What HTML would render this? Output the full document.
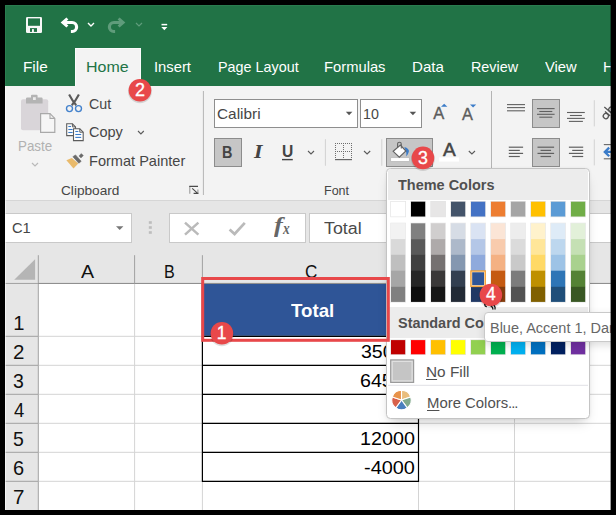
<!DOCTYPE html>
<html lang="en"><head><meta charset="utf-8"><title>Excel - Fill Color</title>
<style>
html,body{margin:0;padding:0;background:#000;overflow:hidden;}
body{width:616px;height:515px;overflow:hidden;position:relative;font-family:"Liberation Sans", sans-serif;}
#app{position:absolute;left:0;top:0;width:616px;height:515px;overflow:hidden;}
.b{position:absolute;}
.s{position:absolute;left:0;top:0;}
.t{position:absolute;white-space:pre;transform-origin:0 0;}
.t u{text-decoration-thickness:1px;text-underline-offset:1.5px;}
.clip{position:absolute;overflow:hidden;}
.dots{letter-spacing:-1.1px;}
.drop{background:#fff;border:1px solid #c4c4c4;border-radius:4.5px;box-sizing:border-box;box-shadow:0 7px 12px -5px rgba(0,0,0,.22), 0 0 3px rgba(0,0,0,.06);}
.tip{background:#fff;border:1px solid #c9c9c9;border-radius:4px;box-sizing:border-box;box-shadow:0 3px 9px rgba(0,0,0,.14);}
</style></head>
<body><div id="app">
<!-- window chrome, ribbon, formula bar, sheet -->
<div class="b" style="left:0px;top:0px;width:616.00px;height:85.50px;background:#217346;"></div>
<div class="b" style="left:0px;top:85.5px;width:616.00px;height:115.10px;background:#f3f3f3;"></div>
<div class="b" style="left:75px;top:48px;width:66.00px;height:38.00px;background:#f3f3f3;box-sizing:border-box;border:1px solid #fcfcfc;border-bottom:none;"></div>
<div class="b" style="left:5px;top:5px;width:606.00px;height:1.00px;background:#2a7d4f;"></div>
<div class="b" style="left:5px;top:5px;width:1.00px;height:80.50px;background:#2a7d4f;"></div>
<div class="b" style="left:0px;top:199.6px;width:616.00px;height:1.00px;background:#d6d6d6;"></div>
<div class="b" style="left:0px;top:200.6px;width:616.00px;height:82.90px;background:#e6e6e6;"></div>
<div class="b" style="left:0px;top:283.5px;width:616.00px;height:231.50px;background:#fff;"></div>
<div class="b" style="left:0px;top:283.5px;width:38.30px;height:231.50px;background:#e6e6e6;"></div>
<div class="b" style="left:-2px;top:213px;width:134.00px;height:30.00px;background:#fff;box-sizing:border-box;border:1px solid #c9c9c9;"></div>
<div class="b" style="left:169px;top:213px;width:137.00px;height:30.00px;background:#fff;box-sizing:border-box;border:1px solid #c9c9c9;"></div>
<div class="b" style="left:309px;top:213px;width:311.00px;height:30.00px;background:#fff;box-sizing:border-box;border:1px solid #c9c9c9;"></div>
<div class="b" style="left:213.8px;top:98.9px;width:144.20px;height:29.10px;background:#fff;box-sizing:border-box;border:1px solid #8e8e8e;"></div>
<div class="b" style="left:359.9px;top:98.9px;width:61.90px;height:29.10px;background:#fff;box-sizing:border-box;border:1px solid #8e8e8e;"></div>
<div class="b" style="left:213.8px;top:137.8px;width:28.40px;height:29.20px;background:#c6c6c6;box-sizing:border-box;border:1px solid #8c8c8c;"></div>
<div class="b" style="left:386px;top:137.8px;width:46.80px;height:29.20px;background:#c6c6c6;box-sizing:border-box;border:1px solid #8c8c8c;"></div>
<div class="b" style="left:532.1px;top:98.9px;width:27.70px;height:29.10px;background:#c6c6c6;box-sizing:border-box;border:1px solid #8c8c8c;"></div>
<div class="b" style="left:532.1px;top:137.8px;width:27.70px;height:29.20px;background:#c6c6c6;box-sizing:border-box;border:1px solid #8c8c8c;"></div>
<div class="b" style="left:202.9px;top:283.6px;width:215.60px;height:52.40px;background:#2f5597;"></div>
<svg class="s" width="616" height="515" viewBox="0 0 616 515">
<rect x="26" y="17" width="16" height="16" rx="1.2" fill="#f7f7f7"/><rect x="28" y="18.4" width="12" height="7.4" fill="#217346"/><rect x="30" y="28.1" width="7" height="3.8" fill="#217346"/><rect x="32" y="29.1" width="1.9" height="3.2" fill="#f7f7f7"/>
<g fill="none" stroke="#fff" opacity="1"><path d="M63 22.5 H72.1 A4.5 4.5 0 0 1 72.1 31.5 H70.9" stroke-width="3.2"/><path d="M67.4 18.5 L62.9 22.5 L67.4 26.5" stroke-linejoin="miter" stroke-width="3"/></g>
<g transform="translate(186,0) scale(-1,1)" fill="none" stroke="#5f9c7b" opacity="1"><path d="M63 22.5 H72.1 A4.5 4.5 0 0 1 72.1 31.5 H70.9" stroke-width="3.2"/><path d="M67.4 18.5 L62.9 22.5 L67.4 26.5" stroke-linejoin="miter" stroke-width="3"/></g>
<polyline points="88,23 91.0,26 94,23" fill="none" stroke="#fff" stroke-width="1.4"/>
<polyline points="136,23 139.0,26 142,23" fill="none" stroke="#5f9c7b" stroke-width="1.2"/>
<line x1="161.5" y1="24.6" x2="167.2" y2="24.6" stroke="#fff" stroke-width="1.5"/>
<polygon points="161.3,27 167.4,27 164.35000000000002,30.2" fill="#fff"/>
<rect x="21" y="99.2" width="27.2" height="31" rx="2" fill="#d9d5d9"/><path d="M26 103.4 V98.6 q0-1.2 1.2-1.2 H31 V95.8 q0-1 1-1 h4.6 q1 0 1 1 V97.4 h3.8 q1.2 0 1.2 1.2 V103.4z" fill="#b4b4b4"/><rect x="33" y="97.2" width="2.8" height="2.8" fill="#ececec"/><path d="M40.6 113.6 H50 L54.8 118.4 V132.4 H40.6z" fill="#f6f6f6" stroke="#a9a9a9" stroke-width="1.2"/><path d="M50 113.6 V118.4 H54.8" fill="none" stroke="#a9a9a9" stroke-width="1.1"/>
<polyline points="32,163 35.0,166 38,163" fill="none" stroke="#b9b9b9" stroke-width="1.2"/>
<g fill="none" stroke="#5a5a5a" stroke-width="2.1"><path d="M69.1 94.4 Q72.6 101 76.2 105.2"/><path d="M78.9 94.4 Q75.4 101 71.8 105.2"/></g><circle cx="69.5" cy="108.6" r="3" fill="none" stroke="#4482cc" stroke-width="1.4"/><circle cx="78.5" cy="108.6" r="3" fill="none" stroke="#4482cc" stroke-width="1.4"/>
<path d="M66.7 123.8 H72.4 L75.5 126.9 V135.6 H66.7z" fill="#fff" stroke="#5c5c5c" stroke-width="1.1"/><path d="M72.4 123.8 V126.9 H75.5" fill="none" stroke="#5c5c5c" stroke-width="1"/><line x1="68.3" y1="126.5" x2="71" y2="126.5" stroke="#3b7cc9" stroke-width="1.1"/>
<line x1="68.3" y1="129.5" x2="72.6" y2="129.5" stroke="#3b7cc9" stroke-width="1.1"/>
<line x1="68.3" y1="132.5" x2="72.6" y2="132.5" stroke="#3b7cc9" stroke-width="1.1"/>
<path d="M73.5 128.8 H79.8 L83.2 132.2 V140.6 H73.5z" fill="#fff" stroke="#5c5c5c" stroke-width="1.1"/><path d="M79.8 128.8 V132.2 H83.2" fill="none" stroke="#5c5c5c" stroke-width="1"/><line x1="75.3" y1="131.5" x2="78.4" y2="131.5" stroke="#3b7cc9" stroke-width="1.1"/>
<line x1="75.3" y1="134.5" x2="81.2" y2="134.5" stroke="#3b7cc9" stroke-width="1.1"/>
<line x1="75.3" y1="137.4" x2="81.2" y2="137.4" stroke="#3b7cc9" stroke-width="1.1"/>
<polyline points="138,131 140.9,134 143.8,131" fill="none" stroke="#5a5a5a" stroke-width="1.1"/>
<polygon points="66.4,160.3 71.8,157.9 78.3,163.5 73.5,168.4" fill="#e9ba6b"/><polygon points="72.9,156.7 75.5,154.9 81.2,161.3 78.8,163.2" fill="#6a6a6a" stroke="#6a6a6a" stroke-width="0.6" stroke-linejoin="round"/><polygon points="78.9,155.9 81.3,153.5 83.4,155.6 81,158" fill="#6a6a6a" stroke="#6a6a6a" stroke-width="0.4" stroke-linejoin="round"/>
<path d="M189.8 186 V193.8 M197.9 189.4 V193.8" fill="none" stroke="#9c9c9c" stroke-width="1.1"/><path d="M189.3 186.4 H198 M193.6 193.4 H198.4 M192.2 188.4 L197.4 193.2" fill="none" stroke="#4a4a4a" stroke-width="1.1"/>
<line x1="203.4" y1="91" x2="203.4" y2="195" stroke="#b4b4b4" stroke-width="1"/>
<line x1="491.5" y1="91" x2="491.5" y2="195" stroke="#b4b4b4" stroke-width="1"/>
<line x1="325.4" y1="139.2" x2="325.4" y2="165.8" stroke="#d2d2d2" stroke-width="1"/>
<line x1="381.8" y1="139.2" x2="381.8" y2="165.8" stroke="#d2d2d2" stroke-width="1"/>
<line x1="594.3" y1="100.2" x2="594.3" y2="126.4" stroke="#d2d2d2" stroke-width="1"/>
<line x1="594.3" y1="139.4" x2="594.3" y2="165.4" stroke="#d2d2d2" stroke-width="1"/>
<polygon points="345.8,111.8 352.4,111.8 349.1,115.2" fill="#555"/>
<polygon points="409.6,111.8 416.2,111.8 412.9,115.2" fill="#555"/>
<polygon points="441,106.8 447.4,106.8 444.2,103.8" fill="#3b7cc9"/><polygon points="470,104.4 476.2,104.4 473.1,107.4" fill="#3b7cc9"/>
<line x1="282" y1="159.6" x2="292.8" y2="159.6" stroke="#444" stroke-width="1.4"/>
<polyline points="308,151 311.0,154 314,151" fill="none" stroke="#5a5a5a" stroke-width="1.1"/>
<rect x="335" y="143" width="1" height="1" fill="#6e6e6e"/><rect x="337" y="143" width="1" height="1" fill="#6e6e6e"/><rect x="339" y="143" width="1" height="1" fill="#6e6e6e"/><rect x="341" y="143" width="1" height="1" fill="#6e6e6e"/><rect x="343" y="143" width="1" height="1" fill="#6e6e6e"/><rect x="345" y="143" width="1" height="1" fill="#6e6e6e"/><rect x="347" y="143" width="1" height="1" fill="#6e6e6e"/><rect x="349" y="143" width="1" height="1" fill="#6e6e6e"/><rect x="351" y="143" width="1" height="1" fill="#6e6e6e"/><rect x="335" y="145" width="1" height="1" fill="#6e6e6e"/><rect x="343" y="145" width="1" height="1" fill="#6e6e6e"/><rect x="351" y="145" width="1" height="1" fill="#6e6e6e"/><rect x="335" y="147" width="1" height="1" fill="#6e6e6e"/><rect x="343" y="147" width="1" height="1" fill="#6e6e6e"/><rect x="351" y="147" width="1" height="1" fill="#6e6e6e"/><rect x="335" y="149" width="1" height="1" fill="#6e6e6e"/><rect x="343" y="149" width="1" height="1" fill="#6e6e6e"/><rect x="351" y="149" width="1" height="1" fill="#6e6e6e"/><rect x="335" y="151" width="1" height="1" fill="#6e6e6e"/><rect x="337" y="151" width="1" height="1" fill="#6e6e6e"/><rect x="339" y="151" width="1" height="1" fill="#6e6e6e"/><rect x="341" y="151" width="1" height="1" fill="#6e6e6e"/><rect x="343" y="151" width="1" height="1" fill="#6e6e6e"/><rect x="345" y="151" width="1" height="1" fill="#6e6e6e"/><rect x="347" y="151" width="1" height="1" fill="#6e6e6e"/><rect x="349" y="151" width="1" height="1" fill="#6e6e6e"/><rect x="351" y="151" width="1" height="1" fill="#6e6e6e"/><rect x="335" y="153" width="1" height="1" fill="#6e6e6e"/><rect x="343" y="153" width="1" height="1" fill="#6e6e6e"/><rect x="351" y="153" width="1" height="1" fill="#6e6e6e"/><rect x="335" y="155" width="1" height="1" fill="#6e6e6e"/><rect x="343" y="155" width="1" height="1" fill="#6e6e6e"/><rect x="351" y="155" width="1" height="1" fill="#6e6e6e"/><rect x="335" y="157" width="1" height="1" fill="#6e6e6e"/><rect x="343" y="157" width="1" height="1" fill="#6e6e6e"/><rect x="351" y="157" width="1" height="1" fill="#6e6e6e"/>
<line x1="335" y1="159.6" x2="352" y2="159.6" stroke="#666" stroke-width="1.2"/>
<polyline points="364,151 367.1,154 370.2,151" fill="none" stroke="#5a5a5a" stroke-width="1.1"/>
<rect x="390.6" y="157.6" width="18.8" height="3.9" fill="#fff" stroke="#bdbdbd" stroke-width="0.9"/><path d="M404.3 146.9 Q409.4 148.4 408.9 151.6 Q408.3 154.2 406.3 156.4 Q406.9 152.6 405.6 150.4z" fill="#3b7cc9"/><path d="M393.2 151.3 L400.4 145 L405.9 151 L399.3 157.1z" fill="#fff" stroke="#636363" stroke-width="1.15" stroke-linejoin="miter"/><path d="M397.6 147.4 V143.8 Q397.6 142.3 399.4 142.3 Q401.3 142.3 401.3 143.9 V148.5" fill="none" stroke="#636363" stroke-width="1.1"/>
<rect x="439.2" y="157.4" width="19.8" height="4.2" fill="#fff"/><polyline points="468.8,151 471.9,154 475,151" fill="none" stroke="#5a5a5a" stroke-width="1.1"/>
<line x1="507" y1="104.6" x2="525" y2="104.6" stroke="#606060" stroke-width="1.1"/>
<line x1="507" y1="107.6" x2="525" y2="107.6" stroke="#606060" stroke-width="1.1"/>
<line x1="507" y1="110.8" x2="525" y2="110.8" stroke="#606060" stroke-width="1.1"/>
<line x1="537.0" y1="108.6" x2="554.6" y2="108.6" stroke="#606060" stroke-width="1.1"/>
<line x1="539.3" y1="111.5" x2="552.3" y2="111.5" stroke="#606060" stroke-width="1.1"/>
<line x1="537.0" y1="114.3" x2="554.6" y2="114.3" stroke="#606060" stroke-width="1.1"/>
<line x1="539.3" y1="117.2" x2="552.3" y2="117.2" stroke="#606060" stroke-width="1.1"/>
<line x1="567.0" y1="112.5" x2="584.8" y2="112.5" stroke="#606060" stroke-width="1.1"/>
<line x1="569.9" y1="115.5" x2="581.9" y2="115.5" stroke="#606060" stroke-width="1.1"/>
<line x1="567.0" y1="118.4" x2="584.8" y2="118.4" stroke="#606060" stroke-width="1.1"/>
<line x1="568.9" y1="121.4" x2="582.9" y2="121.4" stroke="#606060" stroke-width="1.1"/>
<line x1="508.8" y1="147.2" x2="523.1" y2="147.2" stroke="#606060" stroke-width="1.2"/>
<line x1="508.8" y1="150.4" x2="519.8" y2="150.4" stroke="#606060" stroke-width="1.2"/>
<line x1="508.8" y1="153.4" x2="523.1" y2="153.4" stroke="#606060" stroke-width="1.2"/>
<line x1="508.8" y1="156.5" x2="519.8" y2="156.5" stroke="#606060" stroke-width="1.2"/>
<line x1="537.5" y1="147.2" x2="554.1" y2="147.2" stroke="#606060" stroke-width="1.2"/>
<line x1="540.55" y1="150.4" x2="551.05" y2="150.4" stroke="#606060" stroke-width="1.2"/>
<line x1="537.5" y1="153.4" x2="554.1" y2="153.4" stroke="#606060" stroke-width="1.2"/>
<line x1="540.55" y1="156.5" x2="551.05" y2="156.5" stroke="#606060" stroke-width="1.2"/>
<line x1="568.9" y1="147.2" x2="583.2" y2="147.2" stroke="#606060" stroke-width="1.2"/>
<line x1="572.2" y1="150.4" x2="583.2" y2="150.4" stroke="#606060" stroke-width="1.2"/>
<line x1="568.9" y1="153.4" x2="583.2" y2="153.4" stroke="#606060" stroke-width="1.2"/>
<line x1="572.2" y1="156.5" x2="583.2" y2="156.5" stroke="#606060" stroke-width="1.2"/>
<g transform="rotate(-50 608 112)" fill="none" stroke="#555" stroke-width="1.3"><circle cx="603.5" cy="113" r="2.6"/><path d="M606.4 109.4 V116 M609.4 106 V116"/><circle cx="612" cy="113" r="2.6"/></g><line x1="603.8" y1="144.6" x2="616" y2="144.6" stroke="#666" stroke-width="1.1"/>
<line x1="603.8" y1="158.8" x2="616" y2="158.8" stroke="#666" stroke-width="1.1"/>
<path d="M605 151.9 H616 M609.2 147.6 L604.8 151.9 L609.2 156.2" fill="none" stroke="#3b7cc9" stroke-width="2.3"/>
<polygon points="116,226.2 123.4,226.2 119.7,230" fill="#777"/>
<rect x="148.8" y="221.2" width="3" height="2.6" fill="#bdbdbd"/><rect x="148.8" y="226.2" width="3" height="2.6" fill="#bdbdbd"/><rect x="148.8" y="231.2" width="3" height="2.6" fill="#bdbdbd"/><path d="M185 222.6 L198.4 234.6 M198.4 222.6 L185 234.6" fill="none" stroke="#bababa" stroke-width="2.5"/><path d="M229.6 229.4 L234.6 234 L244.8 222.8" fill="none" stroke="#bababa" stroke-width="2.7"/>
<polygon points="35.1,259.2 35.1,279.8 14.2,279.8" fill="#b5b5b5"/>
<line x1="38.3" y1="255.2" x2="38.3" y2="283.5" stroke="#a0a0a0" stroke-width="1"/>
<line x1="134.6" y1="255.2" x2="134.6" y2="283.5" stroke="#a0a0a0" stroke-width="1"/>
<line x1="202.4" y1="255.2" x2="202.4" y2="283.5" stroke="#a0a0a0" stroke-width="1"/>
<line x1="418.5" y1="255.2" x2="418.5" y2="283.5" stroke="#a0a0a0" stroke-width="1"/>
<line x1="514.5" y1="255.2" x2="514.5" y2="283.5" stroke="#a0a0a0" stroke-width="1"/>
<line x1="0" y1="283.4" x2="38.3" y2="283.4" stroke="#b9b9b9" stroke-width="1"/>
<line x1="38.3" y1="283.4" x2="616" y2="283.4" stroke="#a0a0a0" stroke-width="1"/>
<line x1="38.3" y1="283.5" x2="38.3" y2="515" stroke="#a0a0a0" stroke-width="1"/>
<line x1="0" y1="336.3" x2="38.3" y2="336.3" stroke="#a0a0a0" stroke-width="1"/>
<line x1="38.8" y1="336.3" x2="616" y2="336.3" stroke="#d4d4d4" stroke-width="1"/>
<line x1="0" y1="365.3" x2="38.3" y2="365.3" stroke="#a0a0a0" stroke-width="1"/>
<line x1="38.8" y1="365.3" x2="616" y2="365.3" stroke="#d4d4d4" stroke-width="1"/>
<line x1="0" y1="394.3" x2="38.3" y2="394.3" stroke="#a0a0a0" stroke-width="1"/>
<line x1="38.8" y1="394.3" x2="616" y2="394.3" stroke="#d4d4d4" stroke-width="1"/>
<line x1="0" y1="423.3" x2="38.3" y2="423.3" stroke="#a0a0a0" stroke-width="1"/>
<line x1="38.8" y1="423.3" x2="616" y2="423.3" stroke="#d4d4d4" stroke-width="1"/>
<line x1="0" y1="452.3" x2="38.3" y2="452.3" stroke="#a0a0a0" stroke-width="1"/>
<line x1="38.8" y1="452.3" x2="616" y2="452.3" stroke="#d4d4d4" stroke-width="1"/>
<line x1="0" y1="481.3" x2="38.3" y2="481.3" stroke="#a0a0a0" stroke-width="1"/>
<line x1="38.8" y1="481.3" x2="616" y2="481.3" stroke="#d4d4d4" stroke-width="1"/>
<line x1="134.6" y1="284" x2="134.6" y2="515" stroke="#d4d4d4" stroke-width="1"/>
<line x1="202.4" y1="284" x2="202.4" y2="515" stroke="#d4d4d4" stroke-width="1"/>
<line x1="418.5" y1="284" x2="418.5" y2="515" stroke="#d4d4d4" stroke-width="1"/>
<line x1="514.5" y1="284" x2="514.5" y2="515" stroke="#d4d4d4" stroke-width="1"/>
<line x1="202" y1="336.3" x2="419" y2="336.3" stroke="#000" stroke-width="1.2"/>
<line x1="202" y1="365.3" x2="419" y2="365.3" stroke="#000" stroke-width="1.2"/>
<line x1="202" y1="394.3" x2="419" y2="394.3" stroke="#000" stroke-width="1.2"/>
<line x1="202" y1="423.3" x2="419" y2="423.3" stroke="#000" stroke-width="1.2"/>
<line x1="202" y1="452.3" x2="419" y2="452.3" stroke="#000" stroke-width="1.2"/>
<line x1="202" y1="481.3" x2="419" y2="481.3" stroke="#000" stroke-width="1.2"/>
<line x1="202.4" y1="283.6" x2="202.4" y2="481.8" stroke="#000" stroke-width="1.2"/>
<line x1="418.5" y1="283.6" x2="418.5" y2="481.8" stroke="#000" stroke-width="1.2"/>
</svg>
<span class="t" style="left:23.00px;top:59px;font-size:15px;line-height:15px;color:#fff;transform:scaleX(1.0222);">File</span>
<span class="t" style="left:86.00px;top:59px;font-size:15px;line-height:15px;color:#217346;transform:scaleX(1.0649);">Home</span>
<span class="t" style="left:154.00px;top:59px;font-size:15px;line-height:15px;color:#fff;transform:scaleX(0.9848);">Insert</span>
<span class="t" style="left:218.00px;top:59px;font-size:15px;line-height:15px;color:#fff;transform:scaleX(0.9574);">Page Layout</span>
<span class="t" style="left:324.00px;top:59px;font-size:15px;line-height:15px;color:#fff;transform:scaleX(0.9836);">Formulas</span>
<span class="t" style="left:412.00px;top:59px;font-size:15px;line-height:15px;color:#fff;transform:scaleX(1.0081);">Data</span>
<span class="t" style="left:471.00px;top:59px;font-size:15px;line-height:15px;color:#fff;transform:scaleX(0.9575);">Review</span>
<span class="t" style="left:545.00px;top:59px;font-size:15px;line-height:15px;color:#fff;transform:scaleX(0.9844);">View</span>
<div class="clip" style="left:603.00px;top:57px;width:8.30px;height:19px"><span class="t" style="left:0px;top:2px;font-size:15px;line-height:15px;color:#fff;transform:scaleX(0.9915);">Help</span></div>
<span class="t" style="left:18.00px;top:139px;font-size:14.5px;line-height:14.5px;color:#b1b1b1;transform:scaleX(0.9211);">Paste</span>
<span class="t" style="left:89.00px;top:96px;font-size:15px;line-height:15px;color:#464646;transform:scaleX(0.9511);">Cut</span>
<span class="t" style="left:89.00px;top:124px;font-size:15px;line-height:15px;color:#464646;transform:scaleX(0.9664);">Copy</span>
<span class="t" style="left:89.00px;top:153px;font-size:15px;line-height:15px;color:#464646;transform:scaleX(0.9704);">Format Painter</span>
<span class="t" style="left:61.00px;top:184px;font-size:13px;line-height:13px;color:#464646;transform:scaleX(1.0495);">Clipboard</span>
<span class="t" style="left:324.00px;top:184px;font-size:13px;line-height:13px;color:#464646;transform:scaleX(0.9640);">Font</span>
<span class="t" style="left:217.00px;top:106px;font-size:15px;line-height:15px;color:#464646;transform:scaleX(1.0244);">Calibri</span>
<span class="t" style="left:363.00px;top:106px;font-size:15px;line-height:15px;color:#464646;transform:scaleX(0.9508);">10</span>
<span class="t" style="left:222.00px;top:145px;font-size:16px;line-height:16px;color:#444;font-weight:700;transform:scaleX(0.9026);">B</span>
<span class="t" style="left:254.00px;top:143px;font-size:18px;line-height:18px;color:#444;font-weight:700;font-style:italic;font-family:'Liberation Serif', serif;transform:scaleX(1.2129);">I</span>
<span class="t" style="left:282.00px;top:143px;font-size:16.5px;line-height:16.5px;color:#444;font-weight:700;transform:scaleX(0.9463);">U</span>
<span class="t" style="left:433.30px;top:105px;font-size:16.5px;line-height:16.5px;color:#5c5c5c;-webkit-text-stroke:0.35px #5c5c5c;">A</span>
<span class="t" style="left:462.00px;top:107px;font-size:16px;line-height:16px;color:#5c5c5c;transform:scaleX(1.0190);-webkit-text-stroke:0.35px #5c5c5c;">A</span>
<span class="t" style="left:443.00px;top:141px;font-size:18px;line-height:18px;color:#444;transform:scaleX(1.0583);-webkit-text-stroke:0.5px #444;">A</span>
<span class="t" style="left:12.00px;top:220px;font-size:15.5px;line-height:15.5px;color:#464646;transform:scaleX(0.9459);">C1</span>
<span class="t" style="left:324.00px;top:221px;font-size:16px;line-height:16px;color:#4a4a4a;transform:scaleX(1.1138);">Total</span>
<span class="t" style="left:274.00px;top:216px;font-size:19.9px;line-height:19.9px;color:#666;font-weight:700;font-style:italic;font-family:'Liberation Serif', serif;transform:scaleX(1.3279);">f</span>
<span class="t" style="left:283.00px;top:221px;font-size:15.7px;line-height:15.7px;color:#666;font-weight:700;font-style:italic;font-family:'Liberation Serif', serif;transform:scaleX(0.8535);">x</span>
<span class="t" style="left:81.00px;top:262px;font-size:19px;line-height:19px;color:#111;transform:scaleX(1.0320);">A</span>
<span class="t" style="left:164.00px;top:262px;font-size:19px;line-height:19px;color:#111;transform:scaleX(0.8488);">B</span>
<span class="t" style="left:305.00px;top:262px;font-size:19px;line-height:19px;color:#111;transform:scaleX(0.9000);">C</span>
<span class="t" style="left:13.23px;top:313px;font-size:20.2px;line-height:20.2px;color:#111;">1</span>
<span class="t" style="left:13.00px;top:342px;font-size:20.2px;line-height:20.2px;color:#111;transform:scaleX(1.0162);">2</span>
<span class="t" style="left:13.00px;top:371px;font-size:20.2px;line-height:20.2px;color:#111;transform:scaleX(0.9641);">3</span>
<span class="t" style="left:14.00px;top:400px;font-size:20.2px;line-height:20.2px;color:#111;transform:scaleX(0.9171);">4</span>
<span class="t" style="left:13.00px;top:429px;font-size:20.2px;line-height:20.2px;color:#111;transform:scaleX(0.9641);">5</span>
<span class="t" style="left:13.00px;top:458px;font-size:20.2px;line-height:20.2px;color:#111;transform:scaleX(0.9895);">6</span>
<span class="t" style="left:13.00px;top:487px;font-size:20.2px;line-height:20.2px;color:#111;transform:scaleX(1.0162);">7</span>
<span class="t" style="left:291.00px;top:301px;font-size:19px;line-height:19px;color:#fff;font-weight:700;transform:scaleX(0.9848);">Total</span>
<span class="t" style="left:361.00px;top:342px;font-size:19px;line-height:19px;color:#000;transform:scaleX(1.0291);">35000</span>
<span class="t" style="left:360.00px;top:371px;font-size:19px;line-height:19px;color:#000;transform:scaleX(1.0341);">64500</span>
<span class="t" style="left:360.00px;top:429px;font-size:19px;line-height:19px;color:#000;transform:scaleX(1.0392);">12000</span>
<span class="t" style="left:364.00px;top:458px;font-size:19px;line-height:19px;color:#000;transform:scaleX(1.0476);">-4000</span>
<!-- fill colour dropdown -->
<div class="b drop" style="left:386.3px;top:167.5px;width:203.70px;height:251.50px"></div>
<div class="b" style="left:388.0px;top:169.2px;width:200.30px;height:30.40px;background:#ececec;border-radius:3px 3px 0 0"></div>
<div class="b" style="left:388.0px;top:306.8px;width:200.30px;height:31.20px;background:#ececec;"></div>
<svg class="s" width="616" height="515" viewBox="0 0 616 515">
<rect x="390.3" y="201" width="15.6" height="16.2" fill="#e4e4e4"/><rect x="391.0" y="201.7" width="14.2" height="14.8" fill="#ffffff"/><rect x="390.3" y="222.7" width="15.6" height="79.9" fill="#e9e9e9"/><rect x="391.0" y="223.3" width="14.2" height="16.1" fill="#f2f2f2"/><rect x="391.0" y="239.1" width="14.2" height="16.0" fill="#d9d9d9"/><rect x="391.0" y="254.8" width="14.2" height="16.2" fill="#bfbfbf"/><rect x="391.0" y="270.7" width="14.2" height="16.4" fill="#a6a6a6"/><rect x="391.0" y="286.8" width="14.2" height="15.1" fill="#808080"/><rect x="390.3" y="339.4" width="15.6" height="15.6" fill="#e4e4e4"/><rect x="391.0" y="340.1" width="14.2" height="14.2" fill="#c00000"/>
<rect x="410.3" y="201" width="15.6" height="16.2" fill="#e4e4e4"/><rect x="411.0" y="201.7" width="14.2" height="14.8" fill="#000000"/><rect x="410.3" y="222.7" width="15.6" height="79.9" fill="#e9e9e9"/><rect x="411.0" y="223.3" width="14.2" height="16.1" fill="#808080"/><rect x="411.0" y="239.1" width="14.2" height="16.0" fill="#595959"/><rect x="411.0" y="254.8" width="14.2" height="16.2" fill="#404040"/><rect x="411.0" y="270.7" width="14.2" height="16.4" fill="#262626"/><rect x="411.0" y="286.8" width="14.2" height="15.1" fill="#0d0d0d"/><rect x="410.3" y="339.4" width="15.6" height="15.6" fill="#e4e4e4"/><rect x="411.0" y="340.1" width="14.2" height="14.2" fill="#ff0000"/>
<rect x="430.3" y="201" width="15.6" height="16.2" fill="#e4e4e4"/><rect x="431.0" y="201.7" width="14.2" height="14.8" fill="#e7e6e6"/><rect x="430.3" y="222.7" width="15.6" height="79.9" fill="#e9e9e9"/><rect x="431.0" y="223.3" width="14.2" height="16.1" fill="#d0cece"/><rect x="431.0" y="239.1" width="14.2" height="16.0" fill="#aeaaaa"/><rect x="431.0" y="254.8" width="14.2" height="16.2" fill="#757171"/><rect x="431.0" y="270.7" width="14.2" height="16.4" fill="#3a3838"/><rect x="431.0" y="286.8" width="14.2" height="15.1" fill="#161616"/><rect x="430.3" y="339.4" width="15.6" height="15.6" fill="#e4e4e4"/><rect x="431.0" y="340.1" width="14.2" height="14.2" fill="#ffc000"/>
<rect x="450.3" y="201" width="15.6" height="16.2" fill="#e4e4e4"/><rect x="451.0" y="201.7" width="14.2" height="14.8" fill="#44546a"/><rect x="450.3" y="222.7" width="15.6" height="79.9" fill="#e9e9e9"/><rect x="451.0" y="223.3" width="14.2" height="16.1" fill="#d6dce5"/><rect x="451.0" y="239.1" width="14.2" height="16.0" fill="#adb9ca"/><rect x="451.0" y="254.8" width="14.2" height="16.2" fill="#8497b0"/><rect x="451.0" y="270.7" width="14.2" height="16.4" fill="#333f50"/><rect x="451.0" y="286.8" width="14.2" height="15.1" fill="#222a35"/><rect x="450.3" y="339.4" width="15.6" height="15.6" fill="#e4e4e4"/><rect x="451.0" y="340.1" width="14.2" height="14.2" fill="#ffff00"/>
<rect x="470.3" y="201" width="15.6" height="16.2" fill="#e4e4e4"/><rect x="471.0" y="201.7" width="14.2" height="14.8" fill="#4472c4"/><rect x="470.3" y="222.7" width="15.6" height="79.9" fill="#e9e9e9"/><rect x="471.0" y="223.3" width="14.2" height="16.1" fill="#dae3f3"/><rect x="471.0" y="239.1" width="14.2" height="16.0" fill="#b4c7e7"/><rect x="471.0" y="254.8" width="14.2" height="16.2" fill="#8faadc"/><rect x="471.0" y="270.7" width="14.2" height="16.4" fill="#2f5597"/><rect x="471.0" y="286.8" width="14.2" height="15.1" fill="#203864"/><rect x="470.3" y="339.4" width="15.6" height="15.6" fill="#e4e4e4"/><rect x="471.0" y="340.1" width="14.2" height="14.2" fill="#92d050"/>
<rect x="490.3" y="201" width="15.6" height="16.2" fill="#e4e4e4"/><rect x="491.0" y="201.7" width="14.2" height="14.8" fill="#ed7d31"/><rect x="490.3" y="222.7" width="15.6" height="79.9" fill="#e9e9e9"/><rect x="491.0" y="223.3" width="14.2" height="16.1" fill="#fbe5d6"/><rect x="491.0" y="239.1" width="14.2" height="16.0" fill="#f8cbad"/><rect x="491.0" y="254.8" width="14.2" height="16.2" fill="#f4b183"/><rect x="491.0" y="270.7" width="14.2" height="16.4" fill="#c55a11"/><rect x="491.0" y="286.8" width="14.2" height="15.1" fill="#843c0c"/><rect x="490.3" y="339.4" width="15.6" height="15.6" fill="#e4e4e4"/><rect x="491.0" y="340.1" width="14.2" height="14.2" fill="#00b050"/>
<rect x="510.3" y="201" width="15.6" height="16.2" fill="#e4e4e4"/><rect x="511.0" y="201.7" width="14.2" height="14.8" fill="#a5a5a5"/><rect x="510.3" y="222.7" width="15.6" height="79.9" fill="#e9e9e9"/><rect x="511.0" y="223.3" width="14.2" height="16.1" fill="#ededed"/><rect x="511.0" y="239.1" width="14.2" height="16.0" fill="#dbdbdb"/><rect x="511.0" y="254.8" width="14.2" height="16.2" fill="#c9c9c9"/><rect x="511.0" y="270.7" width="14.2" height="16.4" fill="#7c7c7c"/><rect x="511.0" y="286.8" width="14.2" height="15.1" fill="#525252"/><rect x="510.3" y="339.4" width="15.6" height="15.6" fill="#e4e4e4"/><rect x="511.0" y="340.1" width="14.2" height="14.2" fill="#00b0f0"/>
<rect x="530.3" y="201" width="15.6" height="16.2" fill="#e4e4e4"/><rect x="531.0" y="201.7" width="14.2" height="14.8" fill="#ffc000"/><rect x="530.3" y="222.7" width="15.6" height="79.9" fill="#e9e9e9"/><rect x="531.0" y="223.3" width="14.2" height="16.1" fill="#fff2cc"/><rect x="531.0" y="239.1" width="14.2" height="16.0" fill="#ffe699"/><rect x="531.0" y="254.8" width="14.2" height="16.2" fill="#ffd966"/><rect x="531.0" y="270.7" width="14.2" height="16.4" fill="#bf9000"/><rect x="531.0" y="286.8" width="14.2" height="15.1" fill="#806000"/><rect x="530.3" y="339.4" width="15.6" height="15.6" fill="#e4e4e4"/><rect x="531.0" y="340.1" width="14.2" height="14.2" fill="#0070c0"/>
<rect x="550.3" y="201" width="15.6" height="16.2" fill="#e4e4e4"/><rect x="551.0" y="201.7" width="14.2" height="14.8" fill="#5b9bd5"/><rect x="550.3" y="222.7" width="15.6" height="79.9" fill="#e9e9e9"/><rect x="551.0" y="223.3" width="14.2" height="16.1" fill="#deebf7"/><rect x="551.0" y="239.1" width="14.2" height="16.0" fill="#bdd7ee"/><rect x="551.0" y="254.8" width="14.2" height="16.2" fill="#9dc3e6"/><rect x="551.0" y="270.7" width="14.2" height="16.4" fill="#2e75b6"/><rect x="551.0" y="286.8" width="14.2" height="15.1" fill="#1f4e79"/><rect x="550.3" y="339.4" width="15.6" height="15.6" fill="#e4e4e4"/><rect x="551.0" y="340.1" width="14.2" height="14.2" fill="#002060"/>
<rect x="570.3" y="201" width="15.6" height="16.2" fill="#e4e4e4"/><rect x="571.0" y="201.7" width="14.2" height="14.8" fill="#70ad47"/><rect x="570.3" y="222.7" width="15.6" height="79.9" fill="#e9e9e9"/><rect x="571.0" y="223.3" width="14.2" height="16.1" fill="#e2f0d9"/><rect x="571.0" y="239.1" width="14.2" height="16.0" fill="#c5e0b4"/><rect x="571.0" y="254.8" width="14.2" height="16.2" fill="#a9d18e"/><rect x="571.0" y="270.7" width="14.2" height="16.4" fill="#548235"/><rect x="571.0" y="286.8" width="14.2" height="15.1" fill="#385723"/><rect x="570.3" y="339.4" width="15.6" height="15.6" fill="#e4e4e4"/><rect x="571.0" y="340.1" width="14.2" height="14.2" fill="#7030a0"/>
<rect x="470.2" y="270.3" width="15.8" height="16.8" fill="#f4a540"/><rect x="471.6" y="271.7" width="13" height="14" fill="#fbe3c0"/><rect x="472.2" y="272.3" width="11.8" height="12.8" fill="#2f5597"/>
<rect x="390.7" y="359.9" width="22.9" height="22.5" fill="#c5c5c5" stroke="#9b9b9b" stroke-width="1.2"/><rect x="392.2" y="361.4" width="19.9" height="19.5" fill="none" stroke="#e0e0e0" stroke-width="1.2"/>
<line x1="388" y1="385.3" x2="588" y2="385.3" stroke="#e0e0e5" stroke-width="1"/>
<path d="M401.5 400.0 L401.50 390.30 A9.7 9.7 0 0 1 410.73 397.00z" fill="#e9bd7c" stroke="#fff" stroke-width="1.1"/><path d="M401.5 400.0 L410.73 397.00 A9.7 9.7 0 0 1 407.20 407.85z" fill="#80a98b" stroke="#fff" stroke-width="1.1"/><path d="M401.5 400.0 L407.20 407.85 A9.7 9.7 0 0 1 395.80 407.85z" fill="#4a7fbe" stroke="#fff" stroke-width="1.1"/><path d="M401.5 400.0 L395.80 407.85 A9.7 9.7 0 0 1 392.27 397.00z" fill="#d8614b" stroke="#fff" stroke-width="1.1"/><path d="M401.5 400.0 L392.27 397.00 A9.7 9.7 0 0 1 401.50 390.30z" fill="#e8934a" stroke="#fff" stroke-width="1.1"/>
</svg>
<span class="t" style="left:398.00px;top:177px;font-size:15px;line-height:15px;color:#505050;font-weight:700;transform:scaleX(0.9648);">Theme Colors</span>
<span class="t" style="left:398.00px;top:315px;font-size:15px;line-height:15px;color:#505050;font-weight:700;transform:scaleX(0.9628);">Standard Colors</span>
<span class="t" style="left:426.00px;top:364px;font-size:15px;line-height:15px;color:#505050;transform:scaleX(1.0233);"><u>N</u>o Fill</span>
<span class="t" style="left:427.00px;top:395px;font-size:15px;line-height:15px;color:#505050;transform:scaleX(0.9928);"><u>M</u>ore Colors<span class="dots">...</span></span>
<!-- tooltip -->
<div class="b tip" style="left:484.4px;top:311.5px;width:140px;height:30.6px"></div>
<span class="t" style="left:490.00px;top:320px;font-size:15.5px;line-height:15.5px;color:#666;transform:scaleX(0.9332);">Blue, Accent 1, Darker 25%</span>
<!-- annotations -->
<svg class="s" width="616" height="515" viewBox="0 0 616 515">
<rect x="202.7" y="278.5" width="185.6" height="61.8" fill="none" stroke="#e8484a" stroke-width="3"/>
<circle cx="139.95" cy="91.4" r="11.9" fill="#000" opacity="0.13"/><circle cx="139.95" cy="90.2" r="11.3" fill="#e8484a"/>
<circle cx="422.95" cy="159.1" r="11.9" fill="#000" opacity="0.13"/><circle cx="422.95" cy="157.9" r="11.3" fill="#e8484a"/>
<circle cx="490.9" cy="296.2" r="11.9" fill="#000" opacity="0.13"/><circle cx="490.9" cy="295" r="11.3" fill="#e8484a"/>
<circle cx="221.9" cy="334.4" r="11.9" fill="#000" opacity="0.13"/><circle cx="221.9" cy="333.2" r="11.3" fill="#e8484a"/>
<path d="M484.7 304.4 q0.2 2 1.6 2.2 M491.2 306.4 q1.6 0.4 1.7 2.6 M494.2 305.8 q1.4 1.6 0.8 3.2" fill="none" stroke="#111" stroke-width="1.3" stroke-linecap="round"/>
</svg>
<span class="t" style="left:135.00px;top:82px;font-size:17.5px;line-height:17.5px;color:#fff;transform:scaleX(1.0303);-webkit-text-stroke:0.3px #fff;">2</span>
<span class="t" style="left:418.00px;top:150px;font-size:17.5px;line-height:17.5px;color:#fff;transform:scaleX(1.0182);-webkit-text-stroke:0.3px #fff;">3</span>
<span class="t" style="left:485.95px;top:286px;font-size:17.5px;line-height:17.5px;color:#fff;-webkit-text-stroke:0.3px #fff;">4</span>
<span class="t" style="left:216.73px;top:325px;font-size:17.5px;line-height:17.5px;color:#fff;-webkit-text-stroke:0.3px #fff;">1</span>
<div class="b" style="left:0px;top:0px;width:616.00px;height:5.00px;background:#000;"></div>
<div class="b" style="left:0px;top:0px;width:5.00px;height:515.00px;background:#000;"></div>
<div class="b" style="left:611px;top:0px;width:5.00px;height:515.00px;background:#000;"></div>
<div class="b" style="left:0px;top:510px;width:616.00px;height:5.00px;background:#000;"></div>
<div class="b" style="left:610px;top:5px;width:1.00px;height:505.00px;background:rgba(0,0,0,.38);"></div>
<div class="b" style="left:5px;top:86px;width:1.00px;height:424.00px;background:rgba(255,255,255,.55);"></div>
</div></body></html>
